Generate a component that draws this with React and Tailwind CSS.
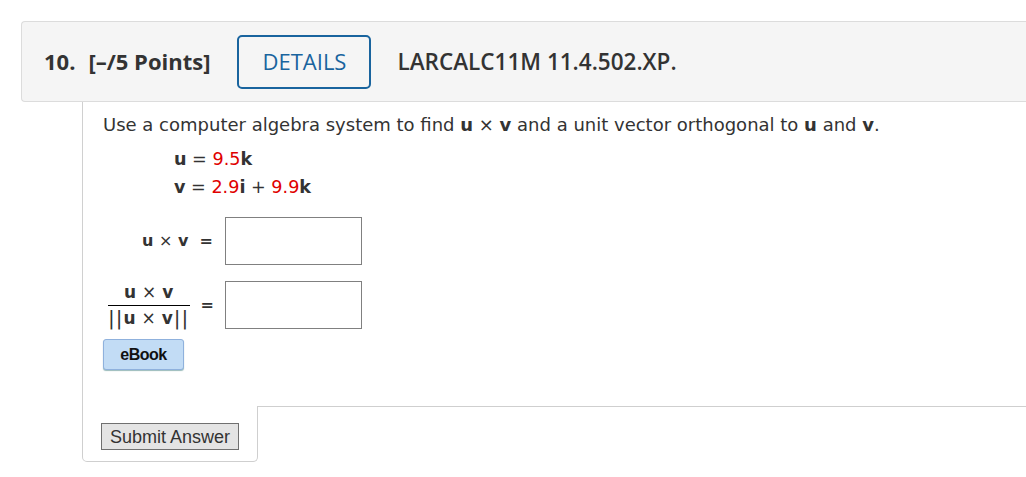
export default function App() {
  const heading = { fontFamily: '"Open Sans", "Liberation Sans", sans-serif' }
  const body = { fontFamily: '"DejaVu Sans", Verdana, sans-serif' }
  return (
    <div className="bg-white w-[1026px] h-[477px] overflow-hidden pt-[21px] pl-[21px] text-[#333]">
      {/* question header */}
      <div style={heading} className="flex items-center h-[81px] bg-[#f5f5f5] border border-r-0 border-[#dcdcdc] rounded-l pl-[22px]">
        <span className="text-[22px] font-bold">10.</span>
        <span className="text-[22px] font-bold ml-[13px]">[–/5 Points]</span>
        <div className="ml-[27px] w-[134px] h-[54px] border-2 border-[#19649e] rounded-[5px] flex items-center justify-center text-[22px] text-[#19649e]">
          DETAILS
        </div>
        <span className="ml-[26px] text-[22.5px] font-semibold">LARCALC11M 11.4.502.XP.</span>
      </div>

      {/* question body */}
      <div className="ml-[61px]">
        <div style={body} className="border-l border-[#d0d0d0] pl-[20px] pt-[11px] pb-[36px]">
          <p className="text-[18px] leading-[24px]">
            Use a computer algebra system to find <b>u</b> × <b>v</b> and a unit vector orthogonal to <b>u</b> and <b>v</b>.
          </p>
          <div className="ml-[71px] mt-[8px] leading-[28px] text-[17.6px]">
            <div><b>u</b> = <span className="text-[#e00000]">9.5</span><b>k</b></div>
            <div><b>v</b> = <span className="text-[#e00000]">2.9</span><b>i</b> + <span className="text-[#e00000]">9.9</span><b>k</b></div>
          </div>

          <div className="flex items-center mt-[16px] text-[16px]">
            <div className="w-[122px] flex justify-end pr-[12px] font-bold">
              <span>u <span className="font-normal">×</span> v&nbsp;&nbsp;=</span>
            </div>
            <div className="w-[137px] h-[48px] border border-[#808080]" />
          </div>

          <div className="flex items-center mt-[16px] text-[16px]">
            <div className="w-[122px] flex items-center justify-end pr-[11px] font-bold">
              <div className="flex flex-col items-center w-[82px] mr-[11px] text-[17px]">
                <div className="leading-[20px]">u <span className="font-normal">×</span> v</div>
                <div className="w-full h-[1px] bg-black mt-[3px]" />
                <div className="leading-[22px] mt-[1px] flex items-center">
                  <span className="font-normal text-[20px] tracking-[1px] leading-[22px]">||</span>
                  <span>u <span className="font-normal">×</span> v</span>
                  <span className="font-normal text-[20px] tracking-[1px] leading-[22px] pl-[1px]">||</span>
                </div>
              </div>
              <span>=</span>
            </div>
            <div className="w-[137px] h-[48px] border border-[#808080]" />
          </div>

          <button
            style={{ fontFamily: '"Liberation Sans", Arial, sans-serif' }}
            className="block mt-[10px] w-[81px] h-[31px] bg-[#c2dcf5] border border-[#8fb1dd] rounded-[3px] text-[16px] font-bold text-[#111] tracking-[-0.5px] shadow-[0_1px_1px_#9bb]"
          >
            eBook
          </button>
        </div>

        {/* footer */}
        <div className="flex">
          <div className="w-[176px] h-[56px] border-l border-r border-b border-[#cfcfcf] rounded-b-[5px] pl-[18px] pt-[17px]">
            <button
              style={{ fontFamily: '"Liberation Sans", Arial, sans-serif' }}
              className="w-[138px] h-[27px] bg-[#e4e4e4] border border-[#707070] text-[18px] text-[#333] leading-none"
            >
              Submit Answer
            </button>
          </div>
          <div className="flex-1 border-t border-[#cfcfcf]" />
        </div>
      </div>
    </div>
  )
}
